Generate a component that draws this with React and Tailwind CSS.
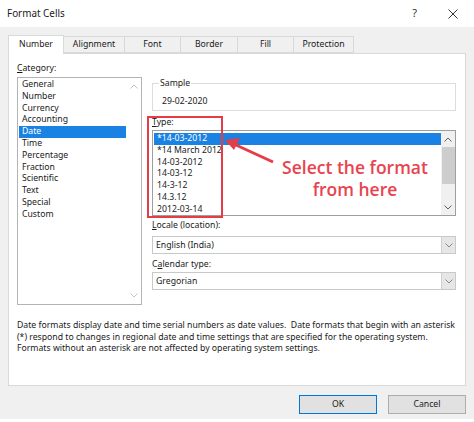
import React from "react";

const categories = ["General","Number","Currency","Accounting","Date","Time","Percentage","Fraction","Scientific","Text","Special","Custom"];
const types = ["*14-03-2012","*14 March 2012","14-03-2012","14-03-12","14-3-12","14.3.12","2012-03-14"];
const tabs = [
  { name: "Number", w: "w-[56px]" },
  { name: "Alignment", w: "w-[61px]" },
  { name: "Font", w: "w-[56px]" },
  { name: "Border", w: "w-[57px]" },
  { name: "Fill", w: "w-[56px]" },
  { name: "Protection", w: "w-[60px]" },
];

function ChevUp({ color = "#606060" }) {
  return (
    <svg width="8" height="5" viewBox="0 0 8 5"><polyline points="0.5,4.5 4,1 7.5,4.5" fill="none" stroke={color} strokeWidth="1" /></svg>
  );
}
function ChevDown({ color = "#606060" }) {
  return (
    <svg width="8" height="5" viewBox="0 0 8 5"><polyline points="0.5,0.5 4,4 7.5,0.5" fill="none" stroke={color} strokeWidth="1" /></svg>
  );
}

function Combo({ value }) {
  return (
    <div className="flex h-[18px] border border-[#c9c9c9] bg-white">
      <div className="flex-1 pl-[3px] leading-[16px]">{value}</div>
      <div className="w-[14px] flex items-center justify-center bg-[#e6e6e6] border-l border-[#cfcfcf]">
        <ChevDown color="#8a8a8a" />
      </div>
    </div>
  );
}

export default function App() {
  return (
    <div className="relative w-[474px] h-[422px] bg-white text-[8.7px] text-[#1a1a1a] font-['Noto_Sans',sans-serif] overflow-hidden">
      {/* title bar */}
      <div className="h-[27px] flex items-center pl-[7px] pr-[16px] bg-white">
        <div className="text-[9.9px]">Format Cells</div>
        <div className="ml-auto flex items-center gap-[31px] text-[#333]">
          <span className="text-[11px]">?</span>
          <svg width="10" height="10" viewBox="0 0 10 10"><path d="M0.5 0.5 L9.5 9.5 M9.5 0.5 L0.5 9.5" stroke="#333" strokeWidth="1" /></svg>
        </div>
      </div>

      {/* body */}
      <div className="h-[392px] bg-[#f0f0f0] px-[8px] pt-[7px] flex flex-col">
        {/* tabs */}
        <div className="flex items-end h-[19px]">
          {tabs.map((t, i) => (
            i === 0 ? (
              <div key={t.name} className={`${t.w} h-[19px] bg-white border border-b-0 border-[#d9d9d9] flex items-center justify-center relative z-10 -mb-[1px]`}>{t.name}</div>
            ) : (
              <div key={t.name} className={`${t.w} h-[17px] bg-[#f0f0f0] border border-l-0 border-[#d9d9d9] flex items-center justify-center`}>{t.name}</div>
            )
          ))}
        </div>

        {/* panel */}
        <div className="h-[333px] bg-white border border-[#d9d9d9] pt-[7px] px-[8px] flex flex-col">
          <div className="flex gap-[10px]">
            {/* left column */}
            <div className="w-[125px] flex flex-col">
              <div className="leading-[14px] h-[14px]"><span className="underline underline-offset-1">C</span>ategory:</div>
              <div className="mt-[2px] h-[228px] border border-[#b4b4b4] flex">
                <div className="flex-1 pl-[1px] pt-[1px]">
                  {categories.map((c) => (
                    <div key={c} className={`h-[11.8px] leading-[11.8px] pl-[3px] ${c === "Date" ? "bg-[#1a82e2] text-white" : ""}`}>{c}</div>
                  ))}
                </div>
                <div className="w-[15px] flex flex-col items-center justify-between py-[6px]">
                  <ChevUp color="#c4c4c4" />
                  <ChevDown color="#c4c4c4" />
                </div>
              </div>
            </div>

            {/* right column */}
            <div className="w-[304px] flex flex-col">
              <fieldset className="mt-[15px] border border-[#dcdcdc] px-[9px] pb-[2px]">
                <legend className="px-[1px] leading-[14px] -ml-[3px]">Sample</legend>
                <div className="pt-[4px] leading-[14px]">29-02-2020</div>
              </fieldset>

              <div className="mt-[4px] leading-[14px] h-[14px]"><span className="underline underline-offset-1">T</span>ype:</div>
              <div className="mt-[1px] h-[86px] border border-[#9e9e9e] flex">
                <div className="flex-1 pl-[1px] pt-[2px]">
                  {types.map((t, i) => (
                    <div key={t} className={`h-[11.8px] leading-[11.8px] pl-[3px] ${i === 0 ? "bg-[#1a82e2] text-white" : ""}`}>{t}</div>
                  ))}
                </div>
                <div className="w-[14px] bg-[#f0f0f0] flex flex-col items-center">
                  <div className="h-[16px] flex items-center justify-center"><ChevUp /></div>
                  <div className="w-[13px] h-[37px] bg-[#cdcdcd]" />
                  <div className="flex-1" />
                  <div className="h-[16px] flex items-center justify-center"><ChevDown /></div>
                </div>
              </div>

              <div className="mt-[2px] leading-[14px] h-[14px]"><span className="underline underline-offset-1">L</span>ocale (location):</div>
              <div className="mt-[4px]"><Combo value="English (India)" /></div>

              <div className="mt-[3px] leading-[14px] h-[14px]">C<span className="underline underline-offset-1">a</span>lendar type:</div>
              <div className="mt-[1px]"><Combo value="Gregorian" /></div>
            </div>
          </div>

          <p className="mt-[15px] leading-[11.7px] whitespace-nowrap">
            Date formats display date and time serial numbers as date values.&nbsp; Date formats that begin with an asterisk
            <br />(*) respond to changes in regional date and time settings that are specified for the operating system.
            <br />Formats without an asterisk are not affected by operating system settings.
          </p>
        </div>

        {/* buttons */}
        <div className="mt-[9px] flex justify-end gap-[11px]">
          <button className="w-[78px] h-[19px] bg-[#e1e1e1] border border-[#0078d7] leading-[17px]">OK</button>
          <button className="w-[78px] h-[19px] bg-[#e1e1e1] border border-[#adadad] leading-[17px]">Cancel</button>
        </div>
      </div>

      {/* annotation overlay */}
      <div className="absolute left-[147px] top-[116px] w-[76px] h-[102px] border-2 border-[#e53c45] pointer-events-none" />
      <svg className="absolute left-0 top-0 pointer-events-none" width="474" height="422">
        <line x1="273" y1="162" x2="236" y2="145" stroke="#e53c45" strokeWidth="3" />
        <polygon points="225,140 240,138 234,150" fill="#e53c45" />
      </svg>
      <div className="absolute left-[270px] top-[156px] w-[170px] text-center text-[#e8434f] text-[17.5px] leading-[22px] font-semibold font-['Open_Sans',sans-serif]">
        Select the format<br />from here
      </div>
    </div>
  );
}
